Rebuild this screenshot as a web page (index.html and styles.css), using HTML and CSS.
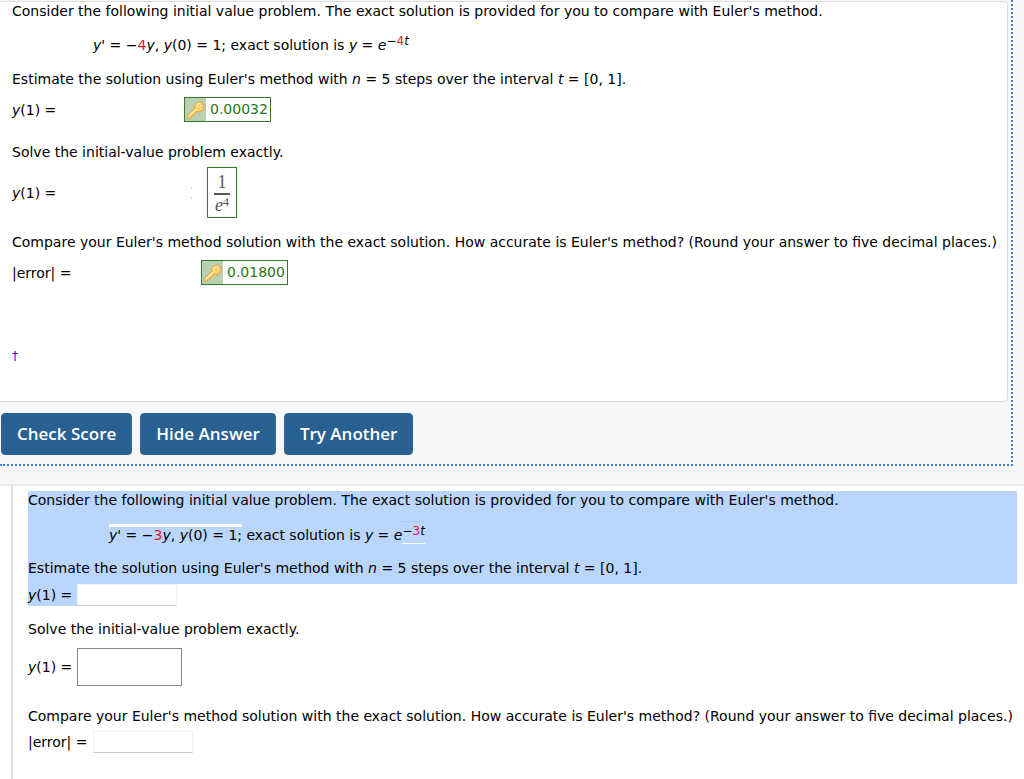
FILE: index.html
```html
<!DOCTYPE html>
<html lang="en">
<head>
<meta charset="utf-8">
<title>Euler's method</title>
<link rel="stylesheet" href="styles.css">
</head>
<body>
<svg class="defs" aria-hidden="true">
  <symbol id="key" viewBox="0 0 16 16">
    <path d="M9 1.5 12.5.8 15.3 3.4 14.8 7 12 9.6 9.2 9.2 7.6 10.6 6.8 12 5.4 12 5 13.6 3.4 13.8 2.8 15.2.6 15.3.4 13 6.6 6.8 6.8 4z" fill="#f8d568" stroke="#e2a850" stroke-width="1"/>
    <path d="M1.4 13.6 8 7.4M8.4 4 10 2.6 12 2" fill="none" stroke="#fdf0a8" stroke-width="1.2"/>
    <circle cx="12.2" cy="4" r="1.1" fill="#fff" stroke="#dda552" stroke-width=".6"/>
  </symbol>
</svg>
<section class="assessment">
  <div class="question">
    <div class="card">
      <p class="line">Consider the following initial value problem. The exact solution is provided for you to compare with Euler's method.</p>
      <p class="line equation"><i>y'</i> = −<span class="num">4</span><i>y</i>, <i>y</i>(0) = 1; exact solution is <i>y</i> = <i>e</i><sup>−<span class="num">4</span><i>t</i></sup></p>
      <p class="line estimate">Estimate the solution using Euler's method with <i>n</i> = 5 steps over the interval <i>t</i> = [0, 1].</p>
      <div class="row row-euler">
        <span class="label label-euler"><i>y</i>(1) =</span>
        <span class="answer"><span class="key"><svg><use href="#key"/></svg></span><span class="value">0.00032</span></span>
      </div>
      <p class="line">Solve the initial-value problem exactly.</p>
      <div class="row row-exact">
        <span class="label label-exact"><i>y</i>(1) =</span>
        <span class="marks"></span>
        <span class="fraction"><span class="top">1</span><span class="bottom"><i>e</i><sup>4</sup></span></span>
      </div>
      <p class="line">Compare your Euler's method solution with the exact solution. How accurate is Euler's method? (Round your answer to five decimal places.)</p>
      <div class="row row-error">
        <span class="label label-error">|error| =</span>
        <span class="answer"><span class="key"><svg><use href="#key"/></svg></span><span class="value">0.01800</span></span>
      </div>
      <a class="dagger" href="#note">†</a>
    </div>
    <div class="actions">
      <button type="button">Check Score</button>
      <button type="button">Hide Answer</button>
      <button type="button">Try Another</button>
    </div>
  </div>
</section>
<section class="practice">
  <div class="selected">
    <p class="line">Consider the following initial value problem. The exact solution is provided for you to compare with Euler's method.</p>
    <p class="line equation"><span class="bar"><i>y'</i> = −<span class="num">3</span><i>y</i>, <i>y</i>(0) = 1;</span> exact solution is <i>y</i> = <i>e</i><sup class="boxed">−<span class="num">3</span><i>t</i></sup></p>
    <p class="line estimate">Estimate the solution using Euler's method with <i>n</i> = 5 steps over the interval <i>t</i> = [0, 1].</p>
  </div>
  <div class="field field-euler">
    <label class="marked" for="euler"><i>y</i>(1) =</label>
    <input id="euler" type="text">
  </div>
  <p class="line">Solve the initial-value problem exactly.</p>
  <div class="field field-exact">
    <label for="exact"><i>y</i>(1) =</label>
    <input id="exact" class="math" type="text">
  </div>
  <p class="line">Compare your Euler's method solution with the exact solution. How accurate is Euler's method? (Round your answer to five decimal places.)</p>
  <div class="field field-error">
    <label for="error">|error| =</label>
    <input id="error" type="text">
  </div>
</section>
</body>
</html>
```
FILE: styles.css
```css
* { box-sizing: border-box; }
body {
  margin: 0;
  background: #fff;
  color: #000;
  font: 14px/18px Verdana, "DejaVu Sans", sans-serif;
}
.defs { display: none; }
.line { margin: 0; white-space: nowrap; }
.num { color: #e02020; }
sup { font-size: 12px; line-height: 0; vertical-align: 5px; }

.assessment {
  background: #f7f7f7;
  border-bottom: 2px solid #e8e8e8;
  padding: 0 11px 18px 0;
}
.question {
  border-right: 2px dotted #3f80dc;
  border-bottom: 2px dotted #3f80dc;
  padding: 1px 3px 9px 0;
}
.card {
  background: #fff;
  border: 1px solid #dcdcdc;
  border-left: 0;
  border-radius: 0 5px 5px 0;
  padding: 0 12px 36px;
}
.equation { padding: 16px 0 0 81px; }
.estimate { padding-top: 16px; }
.row { display: flex; align-items: center; }
.row-euler { padding: 9px 0 21px; }
.row-exact { padding: 6px 0 15px; }
.row-error { padding: 9px 0 62px; }
.label-euler { width: 172px; }
.label-exact { width: 179px; }
.label-error { width: 189px; }
.answer {
  display: flex;
  align-items: stretch;
  height: 25px;
  border: 1px solid #2f7d1f;
  color: #26761a;
}
.key {
  display: flex;
  align-items: center;
  justify-content: center;
  width: 21px;
  background: #b9d0b3;
}
.key svg { width: 18px; height: 18px; }
.value { padding: 2px 2px 2px 4px; }
.marks {
  width: 16px;
  height: 12px;
  background: linear-gradient(#f6d4dc 2px, transparent 2px 10px, #f6d4dc 10px) left / 1px 100% no-repeat;
}
.fraction {
  width: 30px;
  height: 51px;
  border: 1px solid #2f7d1f;
  padding: 3px 6px;
  color: #555;
  font: 18px/22px "Liberation Serif", serif;
  text-align: center;
}
.top { display: block; border-bottom: 2px solid #555; }
.bottom { display: block; white-space: nowrap; line-height: 20px; }
.dagger { display: block; color: #22f; text-decoration: none; font-size: 12px; }

.actions { display: flex; gap: 8px; padding: 11px 0 0 1px; }
button {
  height: 42px;
  padding: 0 15px;
  border: 1px solid #2f6596;
  border-radius: 4px;
  background: #286092;
  color: #fff;
  font: 600 17px/24px "Open Sans", sans-serif;
}

.practice {
  margin-left: 11px;
  border-left: 2px solid #e0e0e0;
  padding: 5px 7px 26px 15px;
}
.selected { background: #bad6fc; padding-bottom: 7px; }
.selected .equation { padding-top: 17px; }
.selected .estimate { padding-top: 15px; }
.bar { position: relative; }
.bar::before {
  content: "";
  position: absolute;
  left: 0;
  right: 0;
  top: -3px;
  height: 3px;
  background: #fff;
}
.boxed { position: relative; }
.boxed::after {
  content: "";
  position: absolute;
  inset: -3px 0;
  height: 21px;
  border-top: 1px solid #a8c8f4;
  border-bottom: 1px solid #fff;
}
.field { display: flex; align-items: center; }
.field label { padding-right: 5px; }
.marked { background: #bad6fc; line-height: 22px; }
input {
  width: 100px;
  height: 22px;
  border: 1px solid #f2f2f2;
  border-bottom-color: #ccc;
  background: #fff;
  font: inherit;
}
input.math { width: 105px; height: 38px; border: 1px solid #858585; }
.field-euler { padding-bottom: 14px; }
.field-exact { padding: 10px 0 21px; }
.field-error { padding-top: 6px; }
```
